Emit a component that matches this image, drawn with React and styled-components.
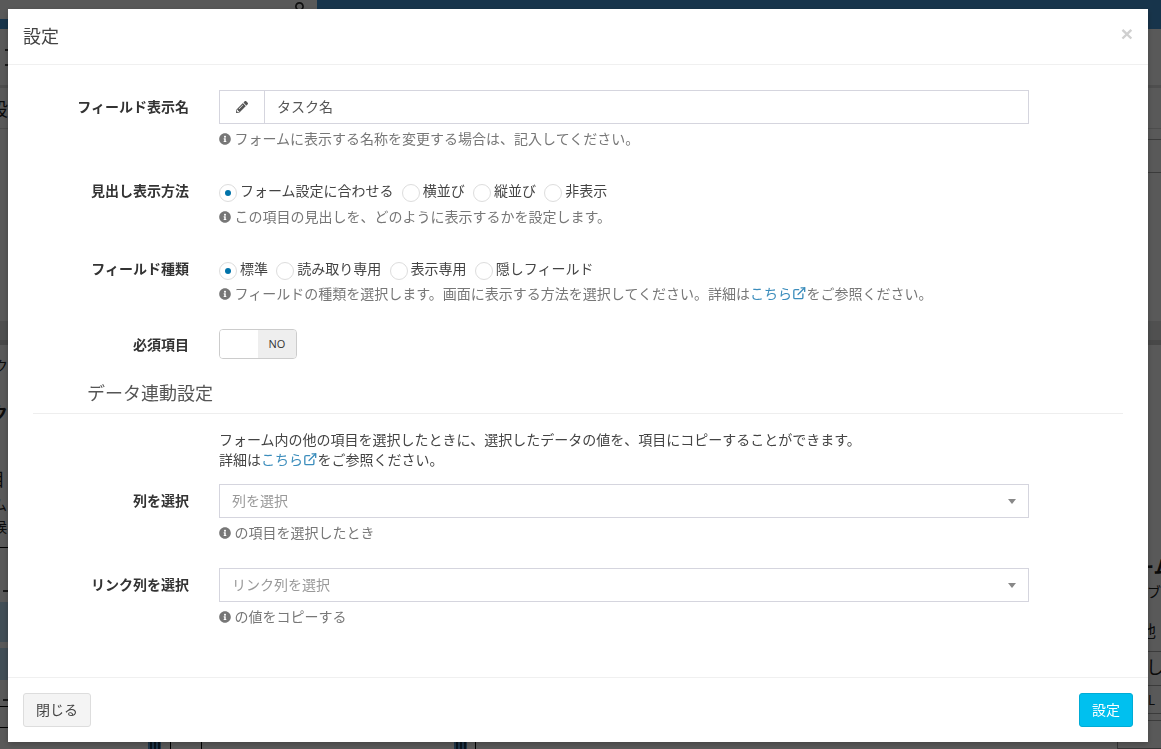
import React from "react";
import styled, { createGlobalStyle } from "styled-components";
import { FaInfoCircle, FaPencilAlt, FaSearch } from "react-icons/fa";
import { ExternalLink } from "lucide-react";

const GlobalStyle = createGlobalStyle`
  html, body {
    margin: 0;
    padding: 0;
    height: 100%;
    overflow: hidden;
  }
  body {
    font-family: "Noto Sans CJK JP", "Open Sans", sans-serif;
    font-size: 14px;
    color: #333;
    background: #fff;
  }
  * {
    box-sizing: border-box;
  }
`;

/* page behind the dialog, only its edges show */
const Page = styled.div`
  width: 1161px;
  height: 749px;
  overflow: hidden;
  background: #fff;
`;

const PageColumns = styled.div`
  display: grid;
  grid-template-columns: 317px 844px;
  height: 742px;
`;

const PageColumn = styled.div`
  display: flex;
  flex-direction: column;
  overflow: hidden;
`;

const PageRow = styled.div`
  height: ${(p) => p.$h}px;
  flex: none;
  background: ${(p) => p.$bg || "#fff"};
  border-bottom: ${(p) => (p.$line ? `1px solid ${p.$line}` : "none")};
  display: flex;
  flex-direction: column;
  justify-content: ${(p) => p.$justify || "center"};
  align-items: ${(p) => (p.$end ? "flex-end" : "flex-start")};
  overflow: hidden;
`;

const SearchMark = styled(FaSearch)`
  font-size: 11px;
  color: #333;
  margin: -5px 11px 0 0;
`;

const Clip = styled.span`
  margin-left: ${(p) => p.$x}px;
  font-size: ${(p) => p.$size || 14}px;
  font-weight: ${(p) => (p.$bold ? 700 : 400)};
  line-height: ${(p) => p.$lh || 20}px;
  color: #222;
  white-space: nowrap;
`;

const Tick = styled.span`
  display: block;
  width: 8px;
  height: 2px;
  margin: ${(p) => p.$m || 0};
  background: #444;
`;

const PageBottom = styled.div`
  height: 7px;
  display: flex;
`;

const Cell = styled.div`
  width: ${(p) => p.$w}px;
  flex: none;
  border-right: ${(p) => (p.$rule ? "1px solid #000" : "none")};
`;

const Bars = styled.div`
  width: 13px;
  flex: none;
  background: repeating-linear-gradient(90deg, #5a9ad0 0 2px, #1d3a55 2px 4px);
`;

const BoxEdge = styled.div`
  width: 44px;
  flex: none;
  margin-left: auto;
  border-left: 1px solid #999;
  border-bottom: 1px solid #999;
`;

const Backdrop = styled.div`
  position: fixed;
  inset: 0;
  background: rgba(0, 0, 0, 0.65);
`;

/* dialog */
const Modal = styled.div`
  position: fixed;
  left: 8px;
  top: 9px;
  width: 1140px;
  height: 733px;
  background: #fff;
  display: flex;
  flex-direction: column;
  box-shadow: 0 2px 6px rgba(0, 0, 0, 0.25);
`;

const ModalHeader = styled.header`
  height: 56px;
  flex: none;
  display: flex;
  align-items: center;
  justify-content: space-between;
  padding: 0 15px;
  border-bottom: 1px solid #f0f0f0;
`;

const ModalTitle = styled.h4`
  margin: 0 0 3px;
  font-size: 18px;
  font-weight: 400;
  line-height: 26px;
  color: #444;
`;

const CloseButton = styled.button`
  border: 0;
  padding: 0;
  margin-bottom: 7px;
  background: none;
  font-family: "Liberation Sans", sans-serif;
  font-size: 21px;
  font-weight: 700;
  line-height: 1;
  color: #d0d0d0;
`;

const ModalBody = styled.div`
  flex: 1;
  padding-top: 25px;
`;

const FormRow = styled.div`
  display: grid;
  grid-template-columns: 181px 810px;
  column-gap: 30px;
  margin-bottom: ${(p) => p.$gap}px;
`;

const FieldLabel = styled.label`
  padding-top: ${(p) => p.$pad || 0}px;
  text-align: right;
  font-size: 14px;
  font-weight: 700;
  line-height: 18px;
  color: #333;
`;

const TextGroup = styled.div`
  display: flex;
  height: 34px;
  border: 1px solid #d5d5de;
`;

const Addon = styled.span`
  width: 45px;
  flex: none;
  display: flex;
  align-items: center;
  justify-content: center;
  border-right: 1px solid #d5d5de;
  color: #555;
  font-size: 12px;
`;

const TextValue = styled.span`
  flex: 1;
  padding-left: 12px;
  line-height: 30px;
  color: #555;
`;

const Hint = styled.p`
  height: 20px;
  margin: ${(p) => p.$top}px 0 0;
  display: flex;
  align-items: center;
  color: #777;
`;

const HintText = styled.span`
  line-height: 18px;
  padding-bottom: 2px;
  white-space: nowrap;
`;

const HintIcon = styled(FaInfoCircle)`
  width: 12px;
  height: 12px;
  margin-right: 3.5px;
  flex: none;
  color: #777;
`;

const RadioRow = styled.div`
  display: flex;
  gap: 8.25px;
  height: 20px;
`;

const RadioItem = styled.label`
  display: flex;
  align-items: flex-start;
  line-height: 18px;
  color: #444;
  white-space: nowrap;
`;

const RadioDot = styled.span`
  width: 18px;
  height: 18px;
  margin: 3px 3px 0 0;
  flex: none;
  display: flex;
  align-items: center;
  justify-content: center;
  border: 1px solid #ddd;
  border-radius: 50%;
  background: #fff;

  &::after {
    content: "";
    width: 6px;
    height: 6px;
    border-radius: 50%;
    background: ${(p) => (p.$on ? "#0073aa" : "transparent")};
  }
`;

const Toggle = styled.div`
  width: 78px;
  height: 30px;
  display: flex;
  border: 1px solid #ccc;
  border-radius: 4px;
  overflow: hidden;
`;

const ToggleBlank = styled.span`
  width: 38px;
  background: #fff;
`;

const ToggleOff = styled.span`
  flex: 1;
  display: flex;
  align-items: center;
  justify-content: center;
  padding-bottom: 2px;
  background: #eee;
  font-family: "Open Sans", sans-serif;
  font-size: 11px;
  color: #333;
`;

const SectionHead = styled.h3`
  margin: 0 25px 15px;
  padding: 0 0 9px 54px;
  border-bottom: 1px solid #eee;
  font-size: 18px;
  font-weight: 400;
  line-height: 24px;
  color: #555;
`;

const Lead = styled.div`
  height: 40px;
  line-height: 20px;
  color: #444;
`;

const Link = styled.a`
  color: #3c8dbc;
  text-decoration: none;
`;

const LinkMark = styled(ExternalLink)`
  width: 14.5px;
  height: 14.5px;
  margin-block: -4px;
  vertical-align: 3px;
  color: #3c8dbc;
`;

const Select = styled.div`
  height: 34px;
  display: flex;
  align-items: center;
  justify-content: space-between;
  padding: 0 12px;
  border: 1px solid #d5d5de;
  color: #999;

  &::after {
    content: "";
    border-left: 4px solid transparent;
    border-right: 4px solid transparent;
    border-top: 5px solid #888;
  }
`;

const SelectText = styled.span`
  line-height: 18px;
  padding-bottom: 2px;
`;

const ModalFooter = styled.footer`
  flex: none;
  display: flex;
  justify-content: space-between;
  padding: 15px;
  border-top: 1px solid #f0f0f0;
`;

const Button = styled.button`
  height: 34px;
  padding: 0 12px 3px;
  border: 1px solid ${(p) => (p.$primary ? "#00acd6" : "#ddd")};
  border-radius: 3px;
  background: ${(p) => (p.$primary ? "#00c0ef" : "#f4f4f4")};
  color: ${(p) => (p.$primary ? "#fff" : "#444")};
  font-family: inherit;
  font-size: 14px;
`;

const leftRows = [
  { h: 19, end: true, search: true },
  { h: 10, bg: "#4496d6" },
  { h: 56, ticks: ["0 0 13px 5px", "0 0 0 5px"] },
  { h: 3, bg: "#dfdfdf" },
  { h: 41, line: "#ddd", clip: { x: -10, text: "設", size: 18 } },
  { h: 192 },
  { h: 19, bg: "#e4e6e6" },
  { h: 5, bg: "#cfcfcf" },
  { h: 39, clip: { x: -6, text: "ク" } },
  { h: 56, clip: { x: -10, text: "ク", size: 18, bold: true } },
  { h: 48, justify: "flex-end", clip: { x: -13, text: "目", size: 18 } },
  { h: 7 },
  { h: 19, clip: { x: -7, text: "ム", lh: 19 } },
  { h: 34, line: "#000", justify: "flex-start", clip: { x: -7, text: "候", lh: 24 } },
  { h: 54, justify: "flex-end", tickEnd: true },
  { h: 40, bg: "#bbdef5" },
  { h: 6 },
  { h: 32, bg: "#bbdef5" },
  { h: 27, line: "#000", justify: "flex-start", tickEnd: true, tickM: "19px 0 0 3px" },
  { h: 21, line: "#000" },
  { h: 14 },
];

const rightRows = [
  { h: 29, bg: "#4496d6" },
  { h: 56 },
  { h: 3, bg: "#dfdfdf" },
  { h: 41, line: "#ddd" },
  { h: 11, line: "#aaa" },
  { h: 33, line: "#aaa" },
  { h: 148 },
  { h: 19, bg: "#e4e6e6" },
  { h: 5, bg: "#cfcfcf" },
  { h: 208 },
  { h: 25, clip: { x: 819, text: "ーム", size: 18, bold: true } },
  { h: 25, clip: { x: 830, text: "ブル" } },
  { h: 49, line: "#aaa", justify: "flex-start", clip: { x: 823, text: "他", size: 16, lh: 54 } },
  { h: 34, line: "#aaa", justify: "flex-start", clip: { x: 829, text: "し", size: 18, lh: 28 } },
  { h: 28, line: "#aaa", clip: { x: 831, text: "L", size: 13 } },
  { h: 7, line: "#aaa" },
  { h: 21 },
];

function BehindRows({ rows }) {
  return (
    <PageColumn>
      {rows.map((r, i) => (
        <PageRow
          key={i}
          $h={r.h}
          $bg={r.bg}
          $line={r.line}
          $end={r.end}
          $justify={r.justify}
        >
          {r.search && <SearchMark />}
          {r.ticks && r.ticks.map((m, j) => <Tick key={j} $m={m} />)}
          {r.tickEnd && <Tick $m={r.tickM || "0 0 10px 3px"} />}
          {r.clip && (
            <Clip $x={r.clip.x} $size={r.clip.size} $bold={r.clip.bold} $lh={r.clip.lh}>
              {r.clip.text}
            </Clip>
          )}
        </PageRow>
      ))}
    </PageColumn>
  );
}

function FieldHint({ top = 5, children }) {
  return (
    <Hint $top={top}>
      <HintIcon />
      <HintText>{children}</HintText>
    </Hint>
  );
}

function Radios({ items }) {
  return (
    <RadioRow>
      {items.map((item, i) => (
        <RadioItem key={item}>
          <RadioDot $on={i === 0} />
          {item}
        </RadioItem>
      ))}
    </RadioRow>
  );
}

function HereLink() {
  return (
    <Link href="#">
      こちら
      <LinkMark strokeWidth={2.2} />
    </Link>
  );
}

export default function App() {
  return (
    <>
      <GlobalStyle />
      <Page>
        <PageColumns>
          <BehindRows rows={leftRows} />
          <BehindRows rows={rightRows} />
        </PageColumns>
        <PageBottom>
          <Cell $w={148} />
          <Bars />
          <Cell $w={10} $rule />
          <Cell $w={31} $rule />
          <Cell $w={252} />
          <Bars />
          <Cell $w={9} $rule />
          <BoxEdge />
        </PageBottom>
      </Page>
      <Backdrop />
      <Modal>
        <ModalHeader>
          <ModalTitle>設定</ModalTitle>
          <CloseButton>×</CloseButton>
        </ModalHeader>
        <ModalBody>
          <FormRow $gap={32}>
            <FieldLabel $pad={7}>フィールド表示名</FieldLabel>
            <div>
              <TextGroup>
                <Addon>
                  <FaPencilAlt />
                </Addon>
                <TextValue>タスク名</TextValue>
              </TextGroup>
              <FieldHint>フォームに表示する名称を変更する場合は、記入してください。</FieldHint>
            </div>
          </FormRow>
          <FormRow $gap={32}>
            <FieldLabel>見出し表示方法</FieldLabel>
            <div>
              <Radios items={["フォーム設定に合わせる", "横並び", "縦並び", "非表示"]} />
              <FieldHint top={6}>この項目の見出しを、どのように表示するかを設定します。</FieldHint>
            </div>
          </FormRow>
          <FormRow $gap={25}>
            <FieldLabel>フィールド種類</FieldLabel>
            <div>
              <Radios items={["標準", "読み取り専用", "表示専用", "隠しフィールド"]} />
              <FieldHint>
                フィールドの種類を選択します。画面に表示する方法を選択してください。詳細は
                <HereLink />
                をご参照ください。
              </FieldHint>
            </div>
          </FormRow>
          <FormRow $gap={21}>
            <FieldLabel $pad={6}>必須項目</FieldLabel>
            <Toggle>
              <ToggleBlank />
              <ToggleOff>NO</ToggleOff>
            </Toggle>
          </FormRow>
          <SectionHead>データ連動設定</SectionHead>
          <FormRow $gap={15}>
            <span />
            <Lead>
              フォーム内の他の項目を選択したときに、選択したデータの値を、項目にコピーすることができます。
              <br />
              詳細は
              <HereLink />
              をご参照ください。
            </Lead>
          </FormRow>
          <FormRow $gap={25}>
            <FieldLabel $pad={7}>列を選択</FieldLabel>
            <div>
              <Select>
                <SelectText>列を選択</SelectText>
              </Select>
              <FieldHint>の項目を選択したとき</FieldHint>
            </div>
          </FormRow>
          <FormRow $gap={0}>
            <FieldLabel $pad={7}>リンク列を選択</FieldLabel>
            <div>
              <Select>
                <SelectText>リンク列を選択</SelectText>
              </Select>
              <FieldHint>の値をコピーする</FieldHint>
            </div>
          </FormRow>
        </ModalBody>
        <ModalFooter>
          <Button>閉じる</Button>
          <Button $primary>設定</Button>
        </ModalFooter>
      </Modal>
    </>
  );
}
